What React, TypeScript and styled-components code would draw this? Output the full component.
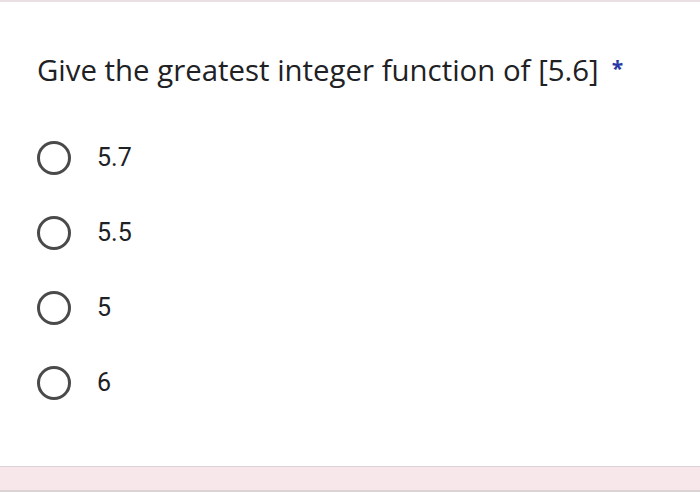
import styled, { createGlobalStyle } from "styled-components";

const GlobalStyle = createGlobalStyle`
  html, body {
    margin: 0;
    padding: 0;
    background: #ffffff;
  }
  body {
    font-family: "Open Sans", "Liberation Sans", sans-serif;
    color: #202124;
  }
`;

const Page = styled.div`
  width: 700px;
  height: 497px;
  display: flex;
  flex-direction: column;
  background: #ffffff;
  overflow: hidden;
`;

const Card = styled.div`
  height: 467px;
  border-top: 2px solid #eadfe2;
  border-bottom: 1px solid #dcd3d6;
  padding: 0 0 0 37px;
  box-sizing: border-box;
`;

const Question = styled.h1`
  margin: 46px 0 0;
  font-family: "Open Sans", "Liberation Sans", sans-serif;
  font-size: 29.4px;
  font-weight: 400;
  line-height: 40px;
  color: #202124;
  white-space: nowrap;
`;

const Required = styled.span`
  color: #2838a8;
  margin-left: 13px;
  font-size: 21px;
  font-weight: 700;
  vertical-align: 5px;
`;

const Options = styled.div`
  display: flex;
  flex-direction: column;
  margin-top: 30px;
`;

const Option = styled.label`
  display: flex;
  align-items: center;
  height: 75px;
  gap: 26px;
`;

const Radio = styled.span`
  width: 34px;
  height: 34px;
  box-sizing: border-box;
  border: 3px solid #4a4a4a;
  border-radius: 50%;
  flex: none;
`;

const OptionText = styled.span`
  font-family: Roboto, "Liberation Sans", sans-serif;
  font-size: 25px;
  color: #202124;
`;

const Band = styled.div`
  height: 23px;
  background: #f7e7eb;
  border-bottom: 2px solid #dcd3d6;
`;

const options = ["5.7", "5.5", "5", "6"];

export default function App() {
  return (
    <>
      <GlobalStyle />
      <Page>
        <Card>
          <Question>
            Give the greatest integer function of [5.6]
            <Required>*</Required>
          </Question>
          <Options>
            {options.map((o) => (
              <Option key={o}>
                <Radio />
                <OptionText>{o}</OptionText>
              </Option>
            ))}
          </Options>
        </Card>
        <Band />
      </Page>
    </>
  );
}
